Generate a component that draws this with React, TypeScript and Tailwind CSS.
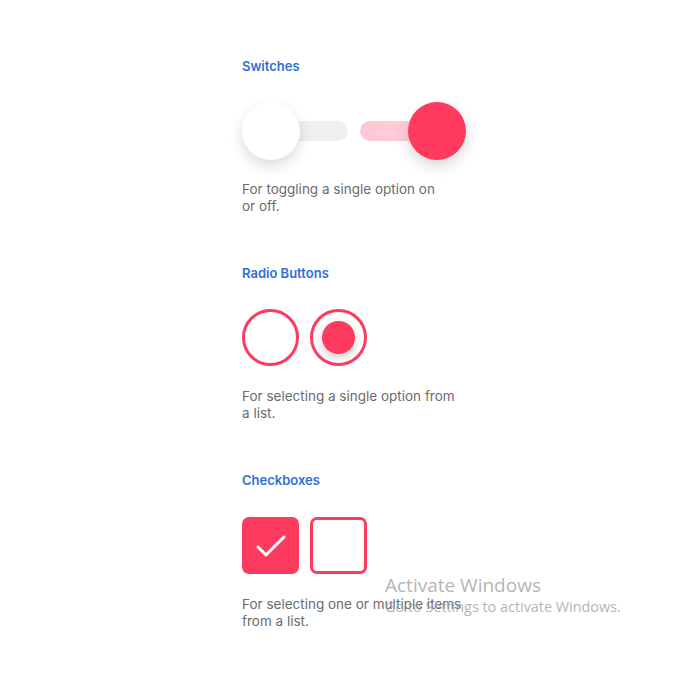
const red = 'bg-[#ff3a5f]';

function Heading({ children }: { children: string }) {
  return (
    <h2 className="text-[13px] leading-4 font-semibold text-[#2f6fd6]">{children}</h2>
  );
}

function Caption({ lines, gap = 'mt-[21px]' }: { lines: [string, string]; gap?: string }) {
  return (
    <p className={`${gap} text-[13.5px] leading-[17px] text-[#6b6b6b] whitespace-nowrap`}>
      {lines[0]}
      <br />
      {lines[1]}
    </p>
  );
}

function Switch({ on }: { on: boolean }) {
  return (
    <div className="relative w-[106px] h-[58px] flex items-center">
      <div
        className={
          on
            ? 'w-full h-5 rounded-full bg-gradient-to-r from-[#ffc9d3] to-[#ffd0d8]'
            : 'w-full h-5 rounded-full bg-[#f0f0f0]'
        }
      />
      <div
        className={
          on
            ? `absolute right-0 top-0 w-[58px] h-[58px] rounded-full ${red} shadow-[0_6px_14px_rgba(0,0,0,0.16)]`
            : 'absolute left-0 top-0 w-[58px] h-[58px] rounded-full bg-white shadow-[0_6px_14px_rgba(0,0,0,0.14)]'
        }
      />
    </div>
  );
}

function Radio({ checked }: { checked: boolean }) {
  return (
    <div className="w-[57px] h-[57px] rounded-full border-[3px] border-[#ff3a5f] flex items-center justify-center bg-white">
      {checked && (
        <div className={`w-[33px] h-[33px] rounded-full ${red} shadow-[0_3px_8px_rgba(0,0,0,0.22)]`} />
      )}
    </div>
  );
}

function Checkbox({ checked }: { checked: boolean }) {
  return checked ? (
    <div className={`w-[57px] h-[57px] rounded-[7px] ${red} flex items-center justify-center`}>
      <svg width="36" height="36" viewBox="0 0 36 36" fill="none">
        <path d="M5 19 L13 27 L31 9" stroke="white" strokeWidth="3" strokeLinecap="round" strokeLinejoin="round" />
      </svg>
    </div>
  ) : (
    <div className="w-[57px] h-[57px] rounded-[7px] border-[3px] border-[#ff3a5f] bg-white" />
  );
}

export default function App() {
  return (
    <div
      className="relative w-[678px] h-[691px] bg-white overflow-hidden"
      style={{ fontFamily: 'Inter, "Liberation Sans", Arial, sans-serif' }}
    >
      <div className="pl-[242px] pt-[58px] flex flex-col gap-[50px]">
        <section>
          <Heading>Switches</Heading>
          <div className="mt-7 flex gap-3">
            <Switch on={false} />
            <Switch on />
          </div>
          <Caption lines={['For toggling a single option on', 'or off.']} />
        </section>
        <section>
          <Heading>Radio Buttons</Heading>
          <div className="mt-7 flex gap-[11px]">
            <Radio checked={false} />
            <Radio checked />
          </div>
          <Caption gap="mt-[22px]" lines={['For selecting a single option from', 'a list.']} />
        </section>
        <section>
          <Heading>Checkboxes</Heading>
          <div className="mt-[29px] flex gap-[11px]">
            <Checkbox checked />
            <Checkbox checked={false} />
          </div>
          <Caption gap="mt-[22px]" lines={['For selecting one or multiple items', 'from a list.']} />
        </section>
      </div>

      {/* Windows activation watermark */}
      <div
        className="absolute left-[385px] top-[573px] text-[#a0a0a0]/80 pointer-events-none"
        style={{ fontFamily: '"Open Sans", "Noto Sans", sans-serif' }}
      >
        <div className="text-[19px] leading-6">Activate Windows</div>
        <div className="text-[14.4px] leading-[20px]">Go to Settings to activate Windows.</div>
      </div>
    </div>
  );
}
